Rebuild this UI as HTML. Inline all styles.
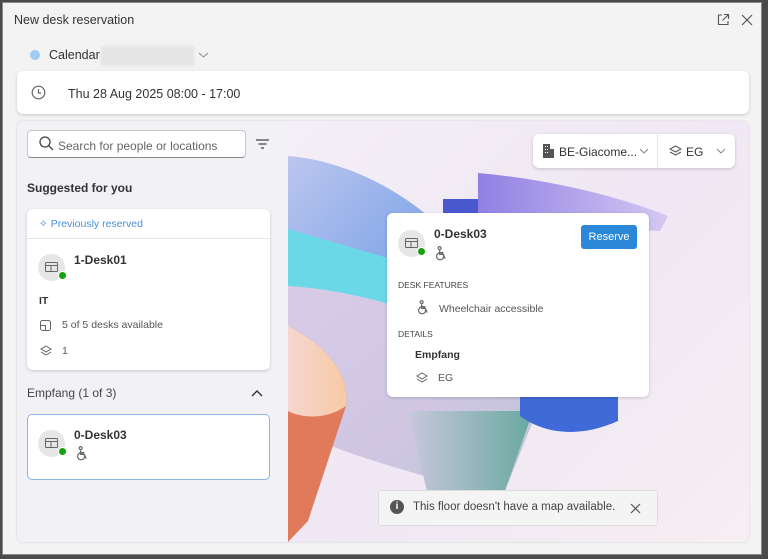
<!DOCTYPE html>
<html><head><meta charset="utf-8"><style>
*{box-sizing:border-box;margin:0;padding:0}
body{width:768px;height:559px;background:#4a4a4a;font-family:"Liberation Sans",sans-serif;position:relative;overflow:hidden;color:#242424}
.win{position:absolute;left:2px;top:2px;width:760px;height:553px;background:#f3f3f3;border:1px solid #888}
.abs{position:absolute}
.title{left:11px;top:10px;font-size:12.5px;color:#333}
.card{background:#fff;border-radius:6px;box-shadow:0 1px 3px rgba(0,0,0,.18)}
.b{font-weight:bold;color:#333}
.av{width:27px;height:27px;border-radius:50%;background:#e6e6e6}
.dot{width:9px;height:9px;border-radius:50%;background:#13a10e;border:1.5px solid #fff}
</style></head><body>
<svg width="0" height="0" style="position:absolute"><defs>
<symbol id="wc" viewBox="0 0 14 16"><g fill="none" stroke="#666" stroke-width="1.3"><circle cx="5" cy="2.2" r="1.6"/><path d="M5 4.5v4.5h4l2 4.5"/><path d="M5 7h4"/><circle cx="5.5" cy="11" r="3.8"/></g></symbol>
<symbol id="desk" viewBox="0 0 13 11"><g fill="none" stroke="#666"><rect x=".5" y=".5" width="12" height="9" rx="1"/><path d="M.5 3.5h12M6 3.5v6"/></g></symbol>
</defs></svg>
<div class="win">
<div class="abs title">New desk reservation</div>
<svg class="abs" style="left:713px;top:10px" width="14" height="14" viewBox="0 0 14 14" fill="none" stroke="#555" stroke-width="1.1"><path d="M6 2H2.5v9.5H12V8M8 1.5h4.5V6M12.5 1.5 6.5 7.5"/></svg>
<svg class="abs" style="left:738px;top:11px" width="12" height="12" viewBox="0 0 12 12" stroke="#555" stroke-width="1.2"><path d="M1 1l10 10M11 1 1 11"/></svg>
<div class="abs" style="left:27px;top:47px;width:10px;height:10px;border-radius:50%;background:#9dccf5"></div>
<div class="abs" style="left:46px;top:45px;font-size:12.5px;color:#333">Calendar</div>
<div class="abs" style="left:98px;top:43px;width:93px;height:20px;background:#e4e4e4;filter:blur(1px)"></div>
<svg class="abs" style="left:195px;top:48px" width="11" height="8"><path d="M1 2l4.5 4 4.5-4" stroke="#888" fill="none"/></svg>
<div class="abs card" style="left:14px;top:68px;width:732px;height:43px"></div>
<svg class="abs" style="left:28px;top:82px" width="15" height="15" viewBox="0 0 15 15" fill="none" stroke="#666" stroke-width="1.2"><circle cx="7.5" cy="7.5" r="6.3"/><path d="M7.5 4v4h2.5"/></svg>
<div class="abs" style="left:65px;top:84px;font-size:12.5px;color:#333">Thu 28 Aug 2025 08:00 - 17:00</div>

<div class="abs" style="left:14px;top:118px;width:732px;height:421px;border-radius:6px;overflow:hidden;background:#f2f2f6;box-shadow:0 0 2px rgba(0,0,0,.15)">
 <div class="abs" style="left:271px;top:0;width:461px;height:421px;background:linear-gradient(135deg,#f4eef6,#efe8f4 50%,#f6eef2)">
 <svg width="461" height="421" viewBox="0 0 461 421">
  <defs>
   <linearGradient id="lav" x1="0" y1="0" x2="1" y2="1"><stop offset="0" stop-color="#d8cbe8"/><stop offset=".6" stop-color="#cfc6e2"/><stop offset="1" stop-color="#b8c4d4"/></linearGradient>
   <linearGradient id="blu" x1="0" y1="0" x2="1" y2="1"><stop offset="0" stop-color="#bcc6ee"/><stop offset="1" stop-color="#6c9ae6"/></linearGradient>
   <linearGradient id="pur" x1="0" y1="0" x2="1" y2="0"><stop offset="0" stop-color="#9080e4"/><stop offset="1" stop-color="#d4c8f2"/></linearGradient>
   <linearGradient id="org" x1="0" y1="0" x2="1" y2="0"><stop offset="0" stop-color="#f6d6d0"/><stop offset="1" stop-color="#f8caa4"/></linearGradient>
   <linearGradient id="teal" x1="0" y1="0" x2="1" y2="0"><stop offset="0" stop-color="#c8c8dc"/><stop offset="1" stop-color="#68a8a0"/></linearGradient>
  </defs>
  <path d="M0 35 C60 40 110 70 140 95 L150 200 L0 150Z" fill="url(#blu)"/>
  <path d="M0 108 L110 140 L140 170 L150 200 L0 170Z" fill="#6ad8e6"/>
  <path d="M0 165 C80 170 170 200 220 240 L245 300 L215 375 C150 360 80 340 30 320 L0 310Z" fill="url(#lav)"/>
  <path d="M120 290 L245 290 L215 375 L140 375Z" fill="url(#teal)"/>
  <path d="M0 205 C40 225 62 255 58 285 L20 400 L0 421Z" fill="#e07a5a"/>
  <path d="M0 205 C40 225 62 255 58 285 C40 298 15 298 0 290Z" fill="url(#org)"/>
  <path d="M155 78 L195 78 L195 100 L155 100Z" fill="#4a58d0"/>
  <path d="M190 52 C260 58 330 75 380 95 L372 110 L190 100Z" fill="url(#pur)"/>
  <path d="M232 275 L330 275 L330 300 C290 318 255 312 232 295Z" fill="#3f6ad8"/>
 </svg>
 </div>
</div>

<!-- left pane -->
<div class="abs" style="left:24px;top:127px;width:219px;height:28px;background:#fff;border:1px solid #c8c8c8;border-bottom-color:#888;border-radius:4px"></div>
<svg class="abs" style="left:36px;top:133px" width="15" height="15" viewBox="0 0 15 15" fill="none" stroke="#444" stroke-width="1.3"><circle cx="6" cy="6" r="5"/><path d="M9.8 9.8 14 14"/></svg>
<div class="abs" style="left:55px;top:136px;font-size:12px;color:#666">Search for people or locations</div>
<svg class="abs" style="left:253px;top:136px" width="13" height="10"><path d="M0 1h13M2.5 5h8M5 9h3" stroke="#444" stroke-width="1.3"/></svg>
<div class="abs b" style="left:24px;top:178px;font-size:12px">Suggested for you</div>

<div class="abs card" style="left:24px;top:206px;width:243px;height:161px"></div>
<div class="abs" style="left:24px;top:235px;width:243px;height:1px;background:#e6e6e6"></div>
<div class="abs" style="left:36px;top:215px;font-size:10.5px;color:#4a90d9">✧ Previously reserved</div>
<div class="abs av" style="left:35px;top:251px"></div>
<svg class="abs" style="left:42px;top:259px" width="13" height="11"><use href="#desk"/></svg>
<div class="abs dot" style="left:55px;top:268px"></div>
<div class="abs b" style="left:71px;top:250px;font-size:12px">1-Desk01</div>
<div class="abs b" style="left:36px;top:292px;font-size:10.5px">IT</div>
<svg class="abs" style="left:37px;top:317px" width="11" height="11" fill="none" stroke="#666"><rect x=".5" y=".5" width="10" height="10" rx="2"/><path d="M.5 5.5h5v5"/></svg>
<div class="abs" style="left:59px;top:316px;font-size:10.5px;color:#555">5 of 5 desks available</div>
<svg class="abs" style="left:37px;top:342px" width="12" height="12" fill="none" stroke="#666"><path d="M6 1l5 3-5 3-5-3z M1 7l5 3 5-3"/></svg>
<div class="abs" style="left:59px;top:342px;font-size:10.5px;color:#555">1</div>

<div class="abs" style="left:24px;top:383px;font-size:12px;color:#444">Empfang (1 of 3)</div>
<svg class="abs" style="left:248px;top:386px" width="12" height="8"><path d="M1 7l5-5 5 5" stroke="#333" stroke-width="1.4" fill="none"/></svg>
<div class="abs" style="left:24px;top:411px;width:243px;height:66px;background:#fff;border:1px solid #8ab4e8;border-radius:5px"></div>
<div class="abs av" style="left:35px;top:427px"></div>
<svg class="abs" style="left:42px;top:435px" width="13" height="11"><use href="#desk"/></svg>
<div class="abs dot" style="left:55px;top:444px"></div>
<div class="abs b" style="left:71px;top:425px;font-size:12px">0-Desk03</div>
<svg class="abs" style="left:73px;top:443px" width="13" height="15"><use href="#wc"/></svg>

<!-- map controls -->
<div class="abs card" style="left:530px;top:131px;width:202px;height:34px"></div>
<div class="abs" style="left:654px;top:131px;width:1px;height:34px;background:#e4e4e4"></div>
<svg class="abs" style="left:540px;top:141px" width="11" height="14" fill="#555"><path d="M0 0h7v14H0z M7 5h4v9H7z" /><path d="M2 2h1v1H2zM4 2h1v1H4zM2 5h1v1H2zM4 5h1v1H4zM2 8h1v1H2zM4 8h1v1H4z" fill="#fff"/></svg>
<div class="abs" style="left:556px;top:142px;font-size:12px;color:#333">BE-Giacome...</div>
<svg class="abs" style="left:636px;top:145px" width="10" height="6"><path d="M1 1l4 4 4-4" stroke="#888" fill="none"/></svg>
<svg class="abs" style="left:666px;top:142px" width="13" height="13" fill="none" stroke="#555"><path d="M6.5 1l5.5 3-5.5 3L1 4z M1 7l5.5 3 5.5-3"/></svg>
<div class="abs" style="left:683px;top:142px;font-size:12px;color:#333">EG</div>
<svg class="abs" style="left:713px;top:145px" width="10" height="6"><path d="M1 1l4 4 4-4" stroke="#888" fill="none"/></svg>

<!-- desk card -->
<div class="abs card" style="left:384px;top:210px;width:262px;height:184px"></div>
<div class="abs av" style="left:395px;top:227px"></div>
<svg class="abs" style="left:402px;top:235px" width="13" height="11"><use href="#desk"/></svg>
<div class="abs dot" style="left:414px;top:244px"></div>
<div class="abs b" style="left:431px;top:224px;font-size:12px">0-Desk03</div>
<svg class="abs" style="left:432px;top:243px" width="13" height="15"><use href="#wc"/></svg>
<div class="abs" style="left:578px;top:222px;width:56px;height:24px;background:#2b88d8;border-radius:3px;color:#fff;font-size:11px;text-align:center;line-height:24px">Reserve</div>
<div class="abs" style="left:395px;top:277px;font-size:8.5px;color:#444">DESK FEATURES</div>
<svg class="abs" style="left:414px;top:297px" width="13" height="15"><use href="#wc"/></svg>
<div class="abs" style="left:436px;top:300px;font-size:10.5px;color:#555">Wheelchair accessible</div>
<div class="abs" style="left:395px;top:326px;font-size:8.5px;color:#444">DETAILS</div>
<div class="abs b" style="left:412px;top:346px;font-size:10.5px">Empfang</div>
<svg class="abs" style="left:413px;top:369px" width="12" height="12" fill="none" stroke="#666"><path d="M6 1l5 3-5 3-5-3z M1 7l5 3 5-3"/></svg>
<div class="abs" style="left:435px;top:369px;font-size:10.5px;color:#555">EG</div>

<!-- toast -->
<div class="abs" style="left:375px;top:487px;width:280px;height:36px;background:#f4f4f4;border:1px solid #ddd;border-radius:3px"></div>
<div class="abs" style="left:387px;top:497px;width:14px;height:14px;border-radius:50%;background:#555;color:#fff;font-size:10px;text-align:center;line-height:14px;font-weight:bold">i</div>
<div class="abs" style="left:410px;top:498px;font-size:11.5px;color:#444;white-space:nowrap">This floor doesn't have a map available.</div>
<svg class="abs" style="left:627px;top:500px" width="11" height="11" stroke="#555" stroke-width="1.2"><path d="M1 1l9 9M10 1 1 10"/></svg>
</div>
</body></html>
